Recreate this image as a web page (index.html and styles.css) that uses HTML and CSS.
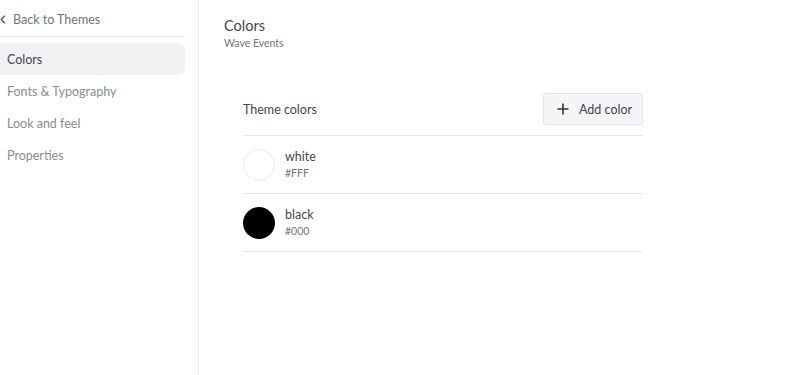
FILE: index.html
```html
<!DOCTYPE html>
<html>
<head>
<meta charset="utf-8">
<link rel="stylesheet" href="styles.css">
</head>
<body>
<div class="app">
  <aside class="sidebar">
    <a class="back">
      <svg class="chev" width="6" height="9" viewBox="0 0 6 9"><path d="M4.8 0.8 L1.3 4.5 L4.8 8.2" fill="none" stroke="#4a5563" stroke-width="1.4"/></svg>
      <span>Back to Themes</span>
    </a>
    <nav class="nav">
      <div class="item active">Colors</div>
      <div class="item">Fonts &amp; Typography</div>
      <div class="item">Look and feel</div>
      <div class="item">Properties</div>
    </nav>
  </aside>
  <main class="main">
    <header class="head">
      <h1>Colors</h1>
      <div class="sub">Wave Events</div>
    </header>
    <section class="card">
      <div class="card-head">
        <div class="card-title">Theme colors</div>
        <button class="btn">
          <svg width="12" height="12" viewBox="0 0 12 12"><path d="M6 0.5 V11.5 M0.5 6 H11.5" stroke="#2b3440" stroke-width="1.6"/></svg>
          <span>Add color</span>
        </button>
      </div>
      <div class="row">
        <div class="swatch white"></div>
        <div class="info"><div class="name">white</div><div class="hex">#FFF</div></div>
      </div>
      <div class="row">
        <div class="swatch black"></div>
        <div class="info"><div class="name">black</div><div class="hex">#000</div></div>
      </div>
    </section>
  </main>
</div>
</body>
</html>
```
FILE: styles.css
```css
* { box-sizing: border-box; }
html, body { margin: 0; padding: 0; background: #fff; }
body { font-family: "Lato", "Noto Sans", sans-serif; color: #3c4653; width: 796px; height: 375px; overflow: hidden; }
.app { display: flex; height: 375px; }
.sidebar { width: 199px; border-right: 1px solid #ebecee; padding-top: 9px; flex-shrink: 0; }
.back { display: flex; align-items: center; gap: 7px; height: 20px; font-size: 12.5px; color: #6d7682; padding-left: 0; }
.chev { display: block; margin-top: 1px; }
.nav { margin-top: 7px; width: 185px; border-top: 1px solid #e4e6e9; padding-top: 6px; }
.item { height: 32px; display: flex; align-items: center; padding-left: 7px; font-size: 12.5px; color: #858d97; border-radius: 0 6px 6px 0; }
.item.active { background: #f1f2f4; color: #3c4653; }
.main { flex: 1; padding: 17px 0 0 25px; }
.head h1 { margin: 0; font-size: 14.5px; font-weight: 400; color: #3c4653; line-height: 18px; }
.sub { font-size: 10.5px; color: #6d7682; line-height: 14px; margin-top: 1px; }
.card { width: 400px; margin: 43px 0 0 19px; }
.card-head { display: flex; justify-content: space-between; align-items: center; height: 32px; border-bottom: 1px solid #e4e6e9; padding-bottom: 10px; box-sizing: content-box; }
.card-title { font-size: 12.5px; color: #3c4653; }
.btn { display: flex; align-items: center; gap: 10px; height: 32px; width: 100px; padding: 0 0 0 13px; background: #f4f5f6; border: 1px solid #dfe1e4; border-radius: 3px; font-family: inherit; font-size: 12.5px; color: #3c4653; }
.row { display: flex; align-items: center; height: 58px; border-bottom: 1px solid #e4e6e9; gap: 10px; }
.swatch { width: 32px; height: 32px; border-radius: 50%; }
.swatch.white { background: #fff; border: 1px solid #e8e9eb; }
.swatch.black { background: #000; }
.name { font-size: 12.5px; color: #3c4653; line-height: 16px; }
.hex { font-size: 10.5px; color: #6d7682; line-height: 14px; margin-top: 1px; }
```
